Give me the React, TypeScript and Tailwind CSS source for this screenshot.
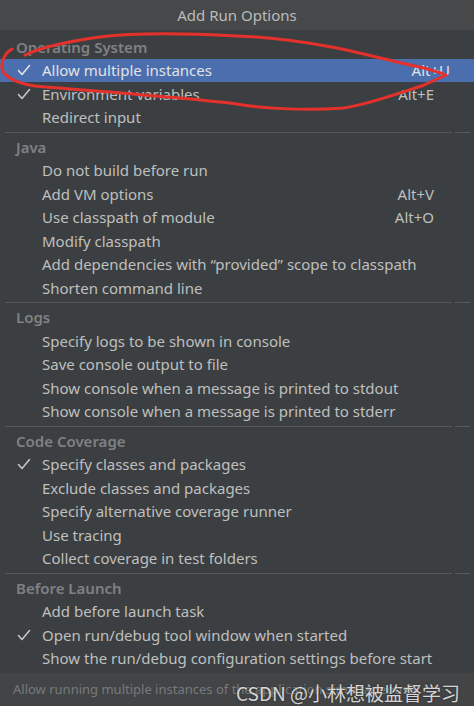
import React from "react";

type Item = { label: string; checked?: boolean; shortcut?: string; selected?: boolean; scPad?: string };
type Section = { title: string; items: Item[] };

const sections: Section[] = [
  {
    title: "Operating System",
    items: [
      { label: "Allow multiple instances", checked: true, shortcut: "Alt+U", selected: true, scPad: "pr-[24px]" },
      { label: "Environment variables", checked: true, shortcut: "Alt+E" },
      { label: "Redirect input" },
    ],
  },
  {
    title: "Java",
    items: [
      { label: "Do not build before run" },
      { label: "Add VM options", shortcut: "Alt+V" },
      { label: "Use classpath of module", shortcut: "Alt+O" },
      { label: "Modify classpath" },
      { label: "Add dependencies with \u201Cprovided\u201D scope to classpath" },
      { label: "Shorten command line" },
    ],
  },
  {
    title: "Logs",
    items: [
      { label: "Specify logs to be shown in console" },
      { label: "Save console output to file" },
      { label: "Show console when a message is printed to stdout" },
      { label: "Show console when a message is printed to stderr" },
    ],
  },
  {
    title: "Code Coverage",
    items: [
      { label: "Specify classes and packages", checked: true },
      { label: "Exclude classes and packages" },
      { label: "Specify alternative coverage runner" },
      { label: "Use tracing" },
      { label: "Collect coverage in test folders" },
    ],
  },
  {
    title: "Before Launch",
    items: [
      { label: "Add before launch task" },
      { label: "Open run/debug tool window when started", checked: true },
      { label: "Show the run/debug configuration settings before start" },
    ],
  },
];

function Check({ light }: { light?: boolean }) {
  return (
    <svg width="14" height="12" viewBox="0 0 14 12" fill="none">
      <path
        d="M1.5 6.5 L5 10.5 L12.5 1.5"
        stroke={light ? "#e4e4e4" : "#c4c4c4"}
        strokeWidth="1.6"
        strokeLinecap="round"
        strokeLinejoin="round"
      />
    </svg>
  );
}

function Row({ item }: { item: Item }) {
  return (
    <div
      className={
        "flex h-[23.5px] items-center " +
        (item.selected ? "bg-[#4b6eaf] text-[#e2e2e2]" : "text-[#bfbfbf]")
      }
    >
      <div className="flex w-[42px] shrink-0 items-center pl-[17px]">
        {item.checked ? <Check light={item.selected} /> : null}
      </div>
      <div className="flex-1 whitespace-nowrap">{item.label}</div>
      {item.shortcut ? (
        <div className={"whitespace-nowrap " + (item.scPad ?? "pr-[40px]")}>{item.shortcut}</div>
      ) : null}
    </div>
  );
}

function Separator() {
  return (
    <div className="flex h-[6px] items-center">
      <div className="ml-[5px] h-px flex-1 bg-[#56595b]" />
      <div className="ml-[3px] mr-[4px] h-px w-[15px] bg-[#56595b]" />
    </div>
  );
}

export default function App() {
  return (
    <div
      className="relative flex h-[706px] w-[474px] flex-col overflow-hidden bg-[#3c3f41] text-[15px]"
      style={{ fontFamily: '"Noto Sans", "Open Sans", sans-serif' }}
    >
      <div className="flex h-[30px] shrink-0 items-center justify-center bg-[#46484a] text-[15px] text-[#bbbbbb]">
        Add Run Options
      </div>
      <div className="flex-1 pt-[5px]">
        {sections.map((s, i) => (
          <div key={s.title}>
            {i > 0 ? <Separator /> : null}
            <div className="flex h-[23.5px] items-center pl-[16px] font-semibold text-[#7f8183]">
              {s.title}
            </div>
            {s.items.map((it) => (
              <Row key={it.label} item={it} />
            ))}
          </div>
        ))}
      </div>
      <div className="flex h-[33px] shrink-0 items-center overflow-hidden whitespace-nowrap bg-[#424446] pl-[13px] text-[13px] text-[#777a7c]">
        Allow running multiple instances of the application simultaneously
      </div>

      <div
        className="absolute bottom-[4px] right-[14px] text-[19px] leading-none text-white/80"
        style={{ fontFamily: '"Noto Sans CJK SC", "Noto Sans", sans-serif', textShadow: "0 0 2px rgba(0,0,0,0.6)" }}
      >
        CSDN @小林想被监督学习
      </div>

      <svg className="pointer-events-none absolute left-0 top-0" width="474" height="706" viewBox="0 0 474 706" fill="none">
        <path
          d="M12 49 C6 52, 1 60, 2 68 C3 76, 15 83, 35 86 C90 91, 170 96, 237 104 C260 108, 300 111, 344 108 C370 104, 400 93, 424 85 C433 81, 442 77, 446 75 C440 72, 430 70, 424 68 C400 63, 370 55, 337 48 C300 41, 270 37, 237 36 C180 33, 133 33, 100 37 C70 41, 40 48, 25 55"
          stroke="#e5312c"
          strokeWidth="3"
          strokeLinecap="round"
          strokeLinejoin="round"
        />
      </svg>
    </div>
  );
}
